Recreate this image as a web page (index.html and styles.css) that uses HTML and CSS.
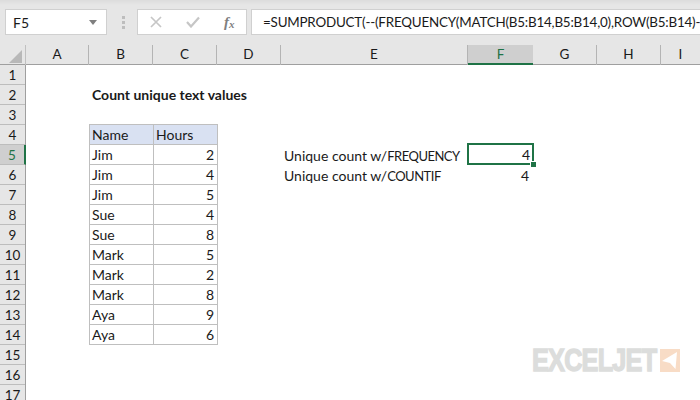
FILE: index.html
```html
<!DOCTYPE html>
<html lang="en">
<head>
<meta charset="utf-8">
<title>Count unique text values</title>
<link rel="stylesheet" href="styles.css">
</head>
<body>
<div class="app">
  <div class="formula-bar">
    <div class="name-box"><span>F5</span><svg class="caret" width="8" height="5" viewBox="0 0 8 5"><path d="M0 0H8L4 5Z" fill="#7f7f7f"/></svg></div>
    <div class="grip"><i></i><i></i><i></i></div>
    <div class="buttons">
      <svg width="12" height="12" viewBox="0 0 12 12"><path d="M1 1L11 11M11 1L1 11" stroke="#c6c6c6" stroke-width="1.7" fill="none"/></svg>
      <svg width="14" height="12" viewBox="0 0 14 12"><path d="M1 6L5 10.5L13 1.5" stroke="#c6c6c6" stroke-width="2.2" fill="none"/></svg>
      <span class="fx">f<sub>x</sub></span>
    </div>
    <div class="formula">=SUMPRODUCT(--(FREQUENCY(MATCH(B5:B14,B5:B14,0),ROW(B5:B14)-ROW(B5)+1)&gt;0))</div>
  </div>
  <div class="col-heads">
    <div class="corner"><svg width="13" height="13" viewBox="0 0 13 13"><path d="M13 0V13H0Z" fill="#b8b8b8"/></svg></div>
    <div class="ch">A</div><div class="ch">B</div><div class="ch">C</div><div class="ch">D</div><div class="ch">E</div><div class="ch active">F</div><div class="ch">G</div><div class="ch">H</div><div class="ch last">I</div>
  </div>
  <div class="body">
    <div class="row-heads">
      <div class="rh">1</div><div class="rh">2</div><div class="rh">3</div><div class="rh">4</div><div class="rh active">5</div><div class="rh">6</div><div class="rh">7</div><div class="rh">8</div><div class="rh">9</div><div class="rh">10</div><div class="rh">11</div><div class="rh">12</div><div class="rh">13</div><div class="rh">14</div><div class="rh">15</div><div class="rh">16</div><div class="rh">17</div>
    </div>
    <div class="sheet">
      <div class="title">Count unique text values</div>
      <div class="table">
        <div class="c head">Name</div><div class="c head">Hours</div>
        <div class="c">Jim</div><div class="c num">2</div>
        <div class="c">Jim</div><div class="c num">4</div>
        <div class="c">Jim</div><div class="c num">5</div>
        <div class="c">Sue</div><div class="c num">4</div>
        <div class="c">Sue</div><div class="c num">8</div>
        <div class="c">Mark</div><div class="c num">5</div>
        <div class="c">Mark</div><div class="c num">2</div>
        <div class="c">Mark</div><div class="c num">8</div>
        <div class="c">Aya</div><div class="c num">9</div>
        <div class="c">Aya</div><div class="c num">6</div>
      </div>
      <div class="results">
        <div class="r-label">Unique count w/<span class="caps">FREQUENCY</span></div><div class="r-val selected">4<span class="handle"></span></div>
        <div class="r-label">Unique count w/<span class="caps">COUNTIF</span></div><div class="r-val">4</div>
      </div>
      <div class="logo"><span class="word">EXCELJET</span><svg width="20" height="23" viewBox="0 0 20 23"><rect width="20" height="23" fill="#f8dcc6"/><path d="M2 12L17 3L15.500 20L10 14Z" fill="#fff"/></svg></div>
    </div>
  </div>
</div>
</body>
</html>
```
FILE: styles.css
```css
* { box-sizing: border-box; }
html, body { margin: 0; padding: 0; background: #fff; }
body { width: 700px; height: 400px; overflow: hidden; font-family: Lato, "Liberation Sans", sans-serif; font-size: 14px; color: #1a1a1a; }
.app { width: 700px; height: 400px; display: flex; flex-direction: column; overflow: hidden; }

.formula-bar { height: 45px; flex: none; background: linear-gradient(#dcdcdc, #e6e6e6 5px); display: flex; align-items: flex-start; padding-top: 9px; }
.name-box { width: 102px; height: 26px; margin-left: 5px; background: #fff; border: 1px solid #d0d0d0; display: flex; align-items: center; justify-content: space-between; padding: 0 9px 0 7px; }
.grip { width: 20px; margin-left: 15px; margin-right: 0; height: 26px; display: flex; flex-direction: column; align-items: flex-start; justify-content: center; gap: 2px; }
.grip i { display: block; width: 3px; height: 3px; background: #bdbdbd; }
.buttons { width: 110px; height: 26px; margin-left: -5px; background: #fff; border: 1px solid #d0d0d0; display: flex; align-items: center; padding-left: 12px; gap: 24px; }
.fx { font-family: "Liberation Serif", serif; font-style: italic; font-weight: bold; font-size: 15px; color: #7f7f7f; line-height: 1; }
.fx sub { font-size: 11px; vertical-align: -1px; line-height: 0; }
.formula { flex: 1; height: 26px; margin-left: 4px; background: #fff; border: 1px solid #d0d0d0; border-right: 0; padding: 0 0 0 11px; line-height: 24px; white-space: nowrap; overflow: hidden; font-size: 13.4px; letter-spacing: -0.2px; }

.col-heads { height: 20px; flex: none; display: grid; grid-template-columns: 26px 63px 64px 64px 64px 187px 65px 64px 64px 1fr; background: #e6e6e6; border-bottom: 1px solid #9f9f9f; }
.corner { display: flex; align-items: flex-end; justify-content: flex-end; padding: 0 3px 2px 0; border-right: 1px solid #c0c0c0; }
.ch { text-align: center; line-height: 19px; border-right: 1px solid #b4b4b4; font-size: 13.5px; }
.ch.last { border-right: 0; }
.ch.active { background: #cfcfcf; color: #1f7346; border-bottom: 2px solid #1f7346; height: 20px; border-right: 0; }

.body { flex: 1; display: flex; min-height: 0; }
.row-heads { width: 26px; flex: none; background: #e6e6e6; border-right: 1px solid #9f9f9f; }
.rh { height: 20px; text-align: center; line-height: 20px; border-bottom: 1px solid #bdbdbd; font-size: 13.5px; }
.rh.active { background: #cfcfcf; color: #1f7346; border-right: 2px solid #1f7346; width: 26px; }

.sheet { flex: 1; position: relative; display: grid; grid-template-columns: 63px 128px 64px 186px 65px 1fr; grid-template-rows: 20px 20px 20px 220px 1fr; }
.title { grid-column: 2 / 5; grid-row: 2; font-weight: bold; line-height: 20px; padding-left: 3px; white-space: nowrap; }
.table { grid-column: 2; grid-row: 4; width: 129px; display: grid; grid-template-columns: 64px 65px; grid-auto-rows: 20px; margin-top: -1px; }
.c { border: 1px solid #bfbfbf; border-width: 1px 0 0 1px; padding-left: 2px; line-height: 20px; }
.c:nth-child(2n) { border-right: 1px solid #bfbfbf; }
.c:nth-last-child(-n+2) { border-bottom: 1px solid #bfbfbf; height: 21px; }
.c.head { background: #d9e1f2; }
.c.num { text-align: right; padding: 0 3px 0 0; }
.results { grid-column: 4 / 6; grid-row: 4; display: grid; grid-template-columns: 186px 65px; grid-auto-rows: 20px; align-content: start; padding-top: 20px; }
.r-label { padding-left: 3px; line-height: 21px; white-space: nowrap; }
.caps { font-size: 13px; letter-spacing: -0.5px; }
.r-val { text-align: right; padding-right: 3px; line-height: 21px; position: relative; }
.r-val.selected { border: 2px solid #1f7346; margin: -2px 0 0 0; line-height: 19px; padding-right: 2px; width: 67px; height: 22px; }
.handle { position: absolute; right: -4px; bottom: -4px; width: 5px; height: 5px; background: #1f7346; box-shadow: 0 0 0 1px #fff; }
.logo { position: absolute; right: 20px; bottom: 28px; display: flex; align-items: center; gap: 5px; }
.word { font-family: "Liberation Sans", sans-serif; font-weight: bold; font-size: 32px; letter-spacing: -1px; color: #dcdddc; line-height: 23px; -webkit-text-stroke: 1.4px #dcdddc; width: 123px; display: block; transform: scaleX(0.79); transform-origin: left center; white-space: nowrap; }
```
